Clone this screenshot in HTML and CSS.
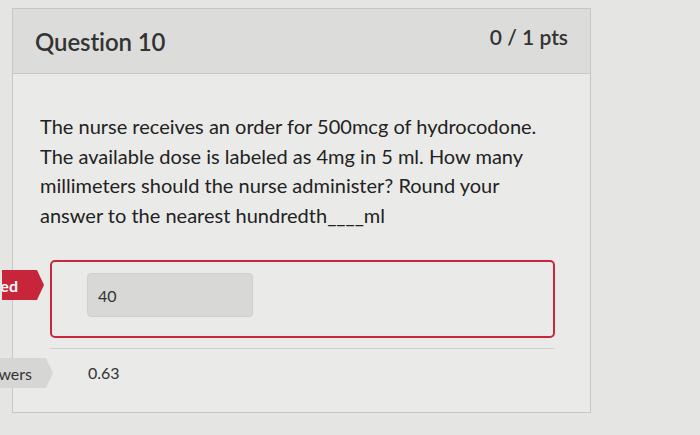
FILE: index.html
```html
<!DOCTYPE html>
<html>
<head>
<meta charset="utf-8">
<link rel="stylesheet" href="styles.css">
</head>
<body>
<div class="page">
  <div class="card">
    <div class="header">
      <span class="title">Question 10</span>
      <span class="pts">0 / 1 pts</span>
    </div>
    <div class="body">
      <p class="text">The nurse receives an order for 500mcg of hydrocodone. The available dose is labeled as 4mg in 5 ml. How many millimeters should the nurse administer? Round your answer to the nearest hundredth____ml</p>
      <div class="answer wrong">
        <div class="badge red"><span>You Answered</span></div>
        <div class="input">40</div>
      </div>
      <div class="answer correct">
        <div class="badge gray"><span>Correct Answers</span></div>
        <span class="value">0.63</span>
      </div>
    </div>
  </div>
</div>
</body>
</html>
```
FILE: styles.css
```css
* { box-sizing: border-box; }
html, body { margin: 0; padding: 0; }
body {
  background: #e5e6e4;
  font-family: Lato, "Open Sans", sans-serif;
  color: #2d3b45;
  width: 700px;
  height: 435px;
  overflow: hidden;
}
.page {
  padding: 8px 0 0 12px;
}
.card {
  width: 579px;
  height: 405px;
  border: 1px solid #c6c8c6;
  background: #eaebe9;
  display: flex;
  flex-direction: column;
}
.header {
  height: 65px;
  background: #dcdddb;
  border-bottom: 1px solid #c9cac8;
  display: flex;
  justify-content: space-between;
  align-items: center;
  padding: 0 22px 0 22px;
  color: #333;
}
.title {
  font-size: 24px;
  font-weight: 600;
  letter-spacing: -0.1px;
}
.pts {
  font-size: 21px;
  font-weight: 600;
  margin-top: -10px;
}
.body {
  padding: 38px 0 0 27px;
  display: flex;
  flex-direction: column;
}
.text {
  margin: 0;
  width: 505px;
  font-size: 20px;
  line-height: 29.5px;
  color: #222;
}
.answer {
  position: relative;
  margin-left: 10px;
  width: 505px;
}
.wrong {
  margin-top: 30px;
  height: 78px;
  border: 2px solid #c8283e;
  border-radius: 5px;
  padding: 11px 0 0 35px;
}
.input {
  width: 166px;
  height: 44px;
  background: #d8d9d7;
  border: 1px solid #cfd0ce;
  border-radius: 4px;
  font-size: 16px;
  color: #333;
  padding: 0 0 0 10px;
  display: flex;
  align-items: center;
}
.correct {
  margin-top: 10px;
  border-top: 1px solid #cfd0ce;
  height: 48px;
  display: flex;
  align-items: center;
  padding-left: 38px;
}
.value {
  font-size: 16px;
  color: #333;
}
.badge {
  position: absolute;
  left: -50px;
  height: 30px;
  display: flex;
  align-items: center;
  justify-content: flex-end;
  overflow: hidden;
  font-size: 16px;
  white-space: nowrap;
  clip-path: polygon(0 0, calc(100% - 7px) 0, 100% 50%, calc(100% - 7px) 100%, 0 100%);
}
.red {
  top: 8px;
  width: 42px;
  padding-right: 26px;
  background: #c7263a;
  color: #fff;
  font-weight: 700;
}
.gray {
  top: 9px;
  width: 53px;
  padding-right: 21px;
  background: #d6d7d5;
  color: #333;
}
```
